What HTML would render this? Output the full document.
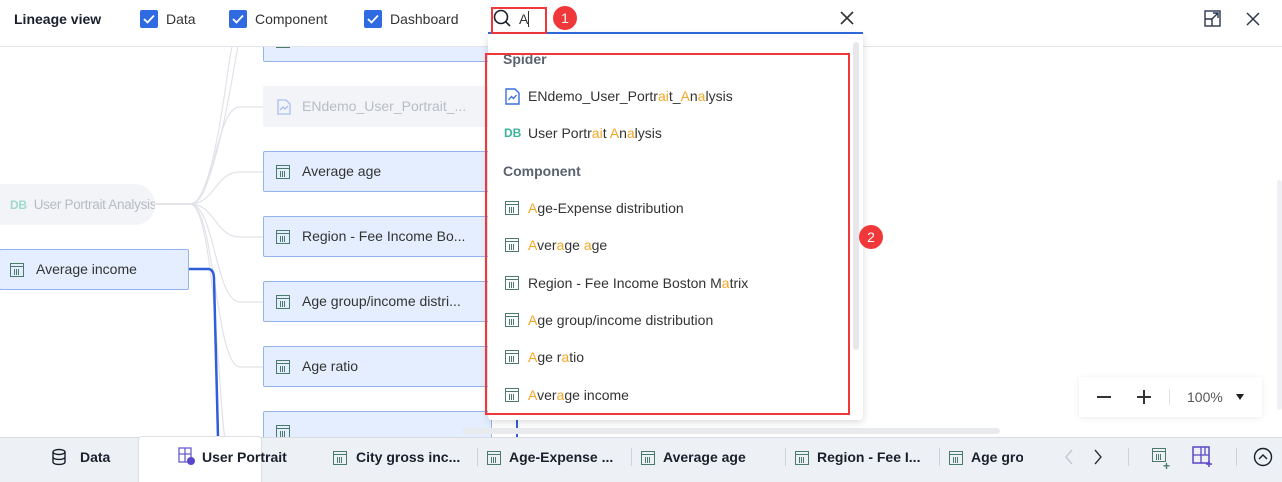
<!DOCTYPE html>
<html><head><style>
*{box-sizing:border-box;margin:0;padding:0}
body{width:1282px;height:482px;overflow:hidden;position:relative;background:#fff;font-family:"Liberation Sans",sans-serif;color:#333;font-size:14px}
.abs{position:absolute}
.hdr{left:0;top:0;width:1282px;height:47px;border-bottom:1px solid #e2e4ea;background:#fff}
.cb{width:18px;height:18px;background:#2f6ae1;border-radius:2px;top:10px}
.lbl{top:11px;font-size:14px;color:#333}
.node{left:263px;width:229px;height:41px;background:#e4eefe;border:1px solid #93b4f0;border-radius:2px;padding-left:38px;line-height:39px;font-size:14px;color:#333;white-space:nowrap;overflow:hidden}
.ic{position:absolute;width:14px;height:14px;border:1.5px solid #4a7a6a;}
.ic:before{content:"";position:absolute;left:0;right:0;top:2px;border-top:1.5px solid #4a7a6a}
.ic:after{content:"";position:absolute;left:3px;bottom:1px;width:6px;height:6px;background:linear-gradient(90deg,#4a7a6a 1px,transparent 1px,transparent 2px,#4a7a6a 2px,#4a7a6a 3px,transparent 3px,transparent 4px,#4a7a6a 4px,#4a7a6a 5px,transparent 5px)}
.dd{left:488px;top:34px;width:375px;height:386px;background:#fff;box-shadow:0 2px 8px rgba(0,0,0,.15);border-radius:0 0 4px 4px}
.it{left:528px;font-size:14px;color:#333;white-space:nowrap}
.it b{color:#f5a623;font-weight:normal}
.sec{left:503px;font-size:14px;font-weight:bold;color:#5a6270}
.bot{left:0;top:437px;width:1282px;height:45px;background:#edf0f5;border-top:1px solid #d8dbe2}
.tab{top:449px;font-size:14px;font-weight:bold;color:#1a1f2c;white-space:nowrap}
.sep{top:448px;width:1px;height:18px;background:#cdd1d8}
</style></head><body>
<svg class="abs" style="left:0;top:47px" width="520" height="390">
<g fill="none" stroke="#e1e3e8" stroke-width="1.2">
<path d="M155 157 H190 C215 157 215 60 240 60 H263"/>
<path d="M155 157 H190 C215 157 215 125 240 125 H263"/>
<path d="M155 157 H190 C215 157 215 190 240 190 H263"/>
<path d="M155 157 H190 C215 157 215 255 240 255 H263"/>
<path d="M155 157 H190 C215 157 215 320 240 320 H263"/>
<path d="M155 157 H190 C215 157 220 380 225 390"/>
<path d="M155 157 H190 C215 157 228 10 232 0"/>
<path d="M155 157 H190 C215 157 235 10 238 0"/>
</g>
<path d="M189 222 H208 Q214 222 214 232 L218 390" fill="none" stroke="#2f5fd8" stroke-width="2.5"/>
<path d="M517 372 V390 M522 372 V390" stroke="#2f5fd8" stroke-width="2"/>
</svg>
<div class="abs node" style="top:20px;height:42px"><span class="ic" style="left:12px;top:13px"></span></div>
<div class="abs node" style="top:86px;background:#f3f4f8;border-color:#f3f4f8;color:#b8bcc4">ENdemo_User_Portrait_...<svg class="abs" style="left:13px;top:12px" width="14" height="16"><path d="M1 1h8l4 4v10H1z" fill="none" stroke="#a9bdf0" stroke-width="1.3"/><path d="M3 11l3-3 2 2 3-3" fill="none" stroke="#a9bdf0" stroke-width="1.3"/></svg></div>
<div class="abs node" style="top:151px">Average age<span class="ic" style="left:12px;top:13px"></span></div>
<div class="abs node" style="top:216px">Region - Fee Income Bo...<span class="ic" style="left:12px;top:13px"></span></div>
<div class="abs node" style="top:281px">Age group/income distri...<span class="ic" style="left:12px;top:13px"></span></div>
<div class="abs node" style="top:346px">Age ratio<span class="ic" style="left:12px;top:13px"></span></div>
<div class="abs node" style="top:411px;height:30px"><span class="ic" style="left:12px;top:13px"></span></div>
<div class="abs" style="left:0;top:184px;width:155px;height:41px;background:#f3f4f8;border-radius:0 20px 20px 0;line-height:41px;font-size:13.5px;letter-spacing:-0.3px;color:#b8bcc4;padding-left:10px;white-space:nowrap;overflow:hidden"><span style="color:#9fd9cd;font-weight:bold;font-size:12px;margin-right:7px">DB</span>User Portrait Analysis</div>
<div class="abs" style="left:-1px;top:249px;width:190px;height:41px;background:#e4eefe;border:1px solid #93b4f0;border-radius:2px;line-height:39px;padding-left:36px;font-size:14px">Average income<span class="ic" style="left:10px;top:13px"></span></div>

<div class="abs" style="left:462px;top:428px;width:538px;height:6px;background:#e9eaee;border-radius:3px"></div>

<div class="abs hdr"></div>
<div class="abs" style="left:14px;top:11px;font-weight:bold;font-size:14px;color:#1a1f2c">Lineage view</div>
<div class="abs cb" style="left:140px"><svg width="18" height="18"><path d="M4 9l3.5 3.5L14 5.5" fill="none" stroke="#fff" stroke-width="1.8"/></svg></div>
<div class="abs lbl" style="left:166px">Data</div>
<div class="abs cb" style="left:229px"><svg width="18" height="18"><path d="M4 9l3.5 3.5L14 5.5" fill="none" stroke="#fff" stroke-width="1.8"/></svg></div>
<div class="abs lbl" style="left:255px">Component</div>
<div class="abs cb" style="left:364px"><svg width="18" height="18"><path d="M4 9l3.5 3.5L14 5.5" fill="none" stroke="#fff" stroke-width="1.8"/></svg></div>
<div class="abs lbl" style="left:390px">Dashboard</div>
<div class="abs" style="left:488px;top:32px;width:375px;height:2px;background:#2f6ae1"></div>
<svg class="abs" style="left:493px;top:9px" width="20" height="20"><circle cx="8" cy="8" r="6.5" fill="none" stroke="#1a1f2c" stroke-width="1.6"/><path d="M13 13l4 4" stroke="#1a1f2c" stroke-width="1.6"/></svg>
<div class="abs" style="left:519px;top:11px;font-size:14px">A<span style="display:inline-block;width:1px;height:16px;background:#333;vertical-align:-3px"></span></div>
<div class="abs" style="left:491px;top:7px;width:56px;height:27px;border:2px solid #f0383a"></div>
<div class="abs" style="left:553px;top:6px;width:24px;height:24px;border-radius:50%;background:#f0383a;color:#fff;text-align:center;line-height:24px;font-size:14px">1</div>
<svg class="abs" style="left:840px;top:11px" width="14" height="14"><path d="M1 1l12 12M13 1L1 13" stroke="#333" stroke-width="1.6"/></svg>
<svg class="abs" style="left:1204px;top:10px" width="18" height="18"><rect x="1" y="1" width="15" height="15" fill="none" stroke="#2a3550" stroke-width="1.4"/><path d="M1 9h7v7M7 10l7-7M9 3h5v5" fill="none" stroke="#2a3550" stroke-width="1.4"/></svg>
<svg class="abs" style="left:1246px;top:12px" width="14" height="14"><path d="M1 1l12 12M13 1L1 13" stroke="#2a3550" stroke-width="1.5"/></svg>
<div class="abs" style="left:1277px;top:180px;width:5px;height:230px;background:#eef0f4;border-radius:3px"></div>

<div class="abs dd"></div>
<div class="abs" style="left:853px;top:42px;width:6px;height:308px;background:#e6e7eb;border-radius:3px"></div>
<div class="abs sec" style="top:51px">Spider</div>
<svg class="abs" style="left:505px;top:88px" width="16" height="17"><path d="M1 1h9l4 4v11H1z" fill="none" stroke="#3b6ee0" stroke-width="1.4"/><path d="M3.5 12l3-3.5 2 2 3-3.5" fill="none" stroke="#3b6ee0" stroke-width="1.3"/></svg>
<div class="abs it" style="top:88px">ENdemo_User_Portr<b>ai</b>t_<b>A</b>n<b>a</b>lysis</div>
<div class="abs" style="left:504px;top:126px;font-weight:bold;font-size:12px;color:#3bb3a0">DB</div>
<div class="abs it" style="top:125px">User Portr<b>ai</b>t <b>A</b>n<b>a</b>lysis</div>
<div class="abs sec" style="top:163px">Component</div>
<span class="abs ic" style="left:505px;top:201px"></span><div class="abs it" style="top:200px"><b>A</b>ge-Expense distribution</div>
<span class="abs ic" style="left:505px;top:238px"></span><div class="abs it" style="top:237px"><b>A</b>ver<b>a</b>ge <b>a</b>ge</div>
<span class="abs ic" style="left:505px;top:276px"></span><div class="abs it" style="top:275px">Region - Fee Income Boston M<b>a</b>trix</div>
<span class="abs ic" style="left:505px;top:313px"></span><div class="abs it" style="top:312px"><b>A</b>ge group/income distribution</div>
<span class="abs ic" style="left:505px;top:350px"></span><div class="abs it" style="top:349px"><b>A</b>ge r<b>a</b>tio</div>
<span class="abs ic" style="left:505px;top:388px"></span><div class="abs it" style="top:387px"><b>A</b>ver<b>a</b>ge income</div>
<div class="abs" style="left:485px;top:53px;width:365px;height:362px;border:2px solid #f0383a"></div>
<div class="abs" style="left:859px;top:225px;width:24px;height:24px;border-radius:50%;background:#f0383a;color:#fff;text-align:center;line-height:24px;font-size:14px">2</div>

<div class="abs" style="left:1079px;top:377px;width:183px;height:40px;background:#fff;box-shadow:0 1px 6px rgba(0,0,0,.08)"></div>
<div class="abs" style="left:1097px;top:396px;width:14px;height:1.5px;background:#333"></div>
<div class="abs" style="left:1137px;top:396px;width:14px;height:1.5px;background:#333"></div>
<div class="abs" style="left:1143px;top:390px;width:1.5px;height:14px;background:#333"></div>
<div class="abs" style="left:1169px;top:389px;width:1px;height:16px;background:#e0e2e6"></div>
<div class="abs" style="left:1187px;top:389px;font-size:14px;color:#555">100%</div>
<div class="abs" style="left:1236px;top:394px;width:0;height:0;border-left:4px solid transparent;border-right:4px solid transparent;border-top:6px solid #222"></div>

<div class="abs bot"></div>
<div class="abs" style="left:138px;top:436px;width:124px;height:46px;background:#fff;border:1px solid #dde0e6;border-bottom:none;border-radius:4px 4px 0 0"></div>
<svg class="abs" style="left:51px;top:448px" width="16" height="18"><ellipse cx="8" cy="4" rx="6" ry="2.5" fill="none" stroke="#1a1f2c" stroke-width="1.4"/><path d="M2 4v10c0 3.3 12 3.3 12 0V4M2 9c0 3.3 12 3.3 12 0" fill="none" stroke="#1a1f2c" stroke-width="1.4"/></svg>
<div class="abs tab" style="left:80px">Data</div>
<svg class="abs" style="left:178px;top:447px" width="18" height="19"><rect x="1" y="1" width="12" height="14" fill="none" stroke="#6a5bd0" stroke-width="1.3"/><path d="M1 7h12M7 1v14" stroke="#6a5bd0" stroke-width="1.3"/><circle cx="13" cy="14" r="4" fill="#5a46c8"/></svg>
<div class="abs tab" style="left:202px">User Portrait</div>
<span class="abs ic" style="left:333px;top:451px"></span><div class="abs tab" style="left:356px">City gross inc...</div>
<div class="abs sep" style="left:477px"></div>
<span class="abs ic" style="left:487px;top:451px"></span><div class="abs tab" style="left:509px">Age-Expense ...</div>
<div class="abs sep" style="left:631px"></div>
<span class="abs ic" style="left:641px;top:451px"></span><div class="abs tab" style="left:663px">Average age</div>
<div class="abs sep" style="left:785px"></div>
<span class="abs ic" style="left:795px;top:451px"></span><div class="abs tab" style="left:817px">Region - Fee I...</div>
<div class="abs sep" style="left:939px"></div>
<span class="abs ic" style="left:949px;top:451px"></span><div class="abs tab" style="left:971px;width:52px;overflow:hidden">Age group</div>
<svg class="abs" style="left:1062px;top:449px" width="50" height="16"><path d="M10 1l-6 7 6 7" fill="none" stroke="#c5c8ce" stroke-width="1.4"/><path d="M33 1l6 7-6 7" fill="none" stroke="#333" stroke-width="1.4"/></svg>
<div class="abs sep" style="left:1128px"></div>
<span class="abs ic" style="left:1152px;top:448px"></span>
<div class="abs" style="left:1163px;top:459px;color:#4a7a6a;font-size:12px;font-weight:bold">+</div>
<svg class="abs" style="left:1192px;top:446px" width="22" height="22"><rect x="1" y="1" width="16" height="16" fill="none" stroke="#5a46c8" stroke-width="1.5"/><path d="M1 9h16M9 1v16M13 1v8" stroke="#5a46c8" stroke-width="1.3"/><path d="M17 15v6M14 18h6" stroke="#5a46c8" stroke-width="1.5"/></svg>
<div class="abs sep" style="left:1236px"></div>
<svg class="abs" style="left:1253px;top:447px" width="20" height="20"><circle cx="10" cy="10" r="8.5" fill="none" stroke="#1a1f2c" stroke-width="1.4"/><path d="M6 12l4-4 4 4" fill="none" stroke="#1a1f2c" stroke-width="1.4"/></svg>
</body></html>
